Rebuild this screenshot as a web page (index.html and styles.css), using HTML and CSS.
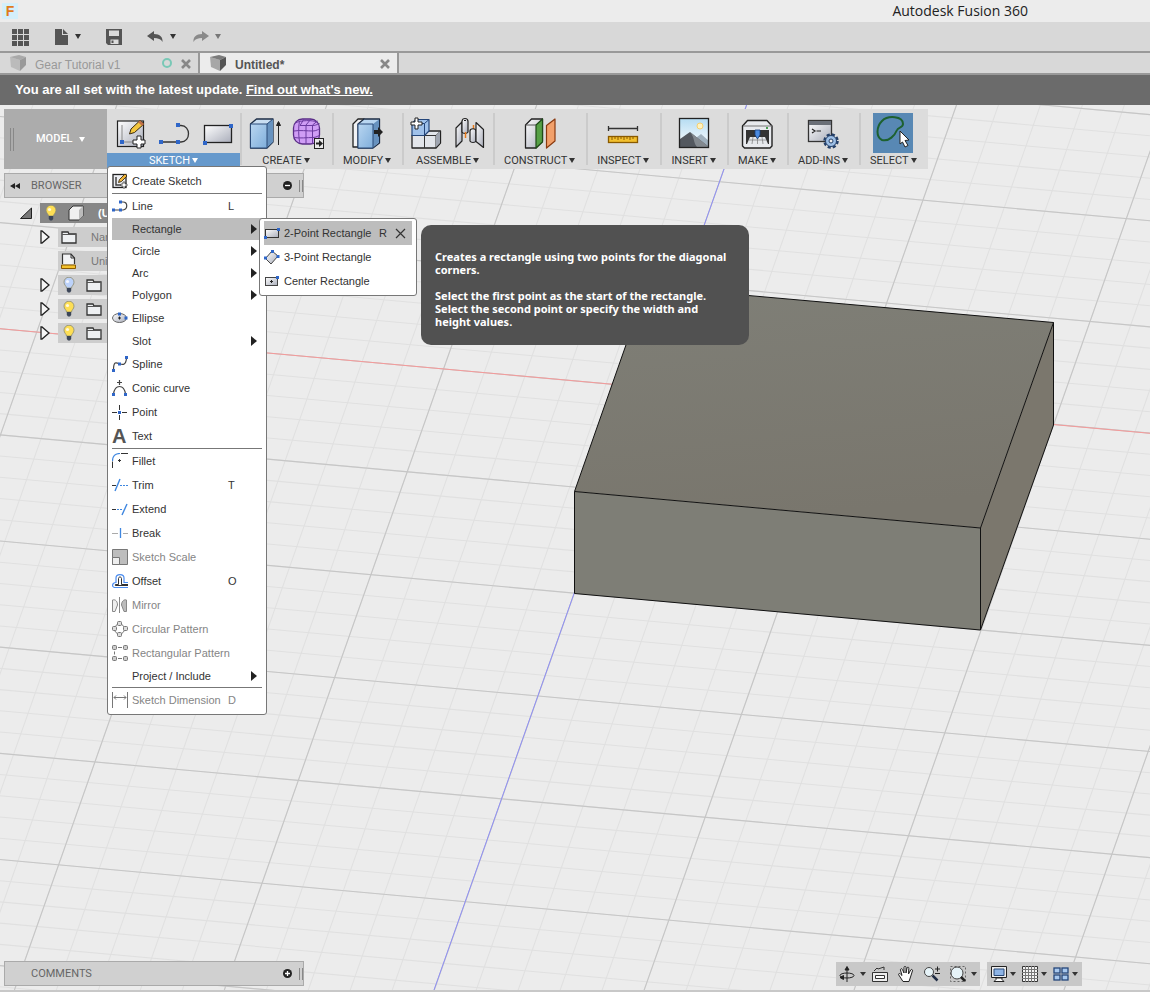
FILE: index.html
```html
<!DOCTYPE html>
<html lang="en">
<head>
<meta charset="utf-8">
<title>Autodesk Fusion 360</title>
<link rel="stylesheet" href="styles.css">
</head>
<body>
<svg class="defs" width="0" height="0" aria-hidden="true">
  <defs>
    <linearGradient id="steel" x1="0" y1="0" x2="1" y2="1"><stop offset="0" stop-color="#fff"/><stop offset="1" stop-color="#a9adba"/></linearGradient>
    <linearGradient id="sky" x1="0" y1="0" x2="0" y2="1"><stop offset="0" stop-color="#b5dcf2"/><stop offset="1" stop-color="#fff"/></linearGradient>
    <linearGradient id="blue" x1="0" y1="0" x2="1" y2="1"><stop offset="0" stop-color="#b9d6f1"/><stop offset="1" stop-color="#7faedb"/></linearGradient>
    <linearGradient id="topface" x1="0" y1="0" x2="0.2" y2="1"><stop offset="0" stop-color="#7f7f77"/><stop offset="1" stop-color="#79766d"/></linearGradient>
    <symbol id="bulb" viewBox="0 0 16 16"><path d="M5.500 11C5.500 9 3 8 3 5.200a5 5 0 0 1 10 0C13 8 10.500 9 10.500 11z" fill="currentColor" stroke="#8a8a70" stroke-width=".8"/><circle cx="6.500" cy="4.500" r="1.600" fill="#fff" opacity=".8"/><path d="M5.800 11h4.400v3L9 15.500H7L5.800 14z" fill="#3c4658"/></symbol>
    <symbol id="folder" viewBox="0 0 16 16"><path d="M1 14V3h6l1 2h7v9z" fill="#eef0f2" stroke="#333" stroke-width="1.300"/><path d="M1 5.500h14" stroke="#555"/></symbol>
    <symbol id="cube" viewBox="0 0 16 16"><path d="M0 2 9 0l7 2-6 3z" fill="currentColor" opacity=".75"/><path d="M0 2l10 3v11L1 12z" fill="currentColor" opacity=".45"/><path d="M10 5l6-3v8l-6 6z" fill="currentColor"/></symbol>
    <symbol id="node" viewBox="0 0 4 4"><path d="M0 0h4v4H0z" fill="#2f66c8"/></symbol>
    <symbol id="collapsed" viewBox="0 0 10 14"><path d="M1 1h1l7 6-7 6H1z" fill="#f6f6f6" stroke="#222" stroke-width="1.300"/></symbol>
  </defs>
</svg>

<header class="titlebar"><span class="logo" aria-hidden="true">F</span><h1>Autodesk Fusion 360</h1></header>

<div class="quickbar" role="toolbar" aria-label="Quick access">
  <button aria-label="Data panel"><svg width="18" height="18" fill="#555"><path d="M0 1h5v5H0zM6 1h5v5H6zM12 1h5v5h-5zM0 7h5v5H0zM6 7h5v5H6zM12 7h5v5h-5zM0 13h5v5H0zM6 13h5v5H6zM12 13h5v5h-5z"/></svg></button>
  <button class="file" aria-label="File"><svg width="14" height="17" fill="#555"><path d="M0 1h7v6h6v10H0zM8 1l5 5H8z"/></svg><i class="caret"></i></button>
  <button class="save" aria-label="Save"><svg width="16" height="17"><path d="M0 1h16v16H2l-2-2z" fill="#555"/><path d="M3 2.500h10V8H3zM4.500 11.500h8V16h-8z" fill="#dcdcdc"/><path d="M5.500 12.500h2V15h-2z" fill="#555"/></svg></button>
  <button class="undo" aria-label="Undo"><svg width="17" height="14"><path d="M0 6l7-5v3c6 0 9 3 8.500 8C14 9 11 8 7 8v3z" fill="#555"/></svg><i class="caret"></i></button>
  <button class="redo" aria-label="Redo"><svg width="17" height="14"><path d="M17 6l-7-5v3C4 4 1 7 1.500 12 3 9 6 8 10 8v3z" fill="#8a8a8a"/></svg><i class="caret"></i></button>
</div>

<nav class="tabs" aria-label="Documents">
  <div class="tab"><svg class="cube" width="16" height="16" color="#999"><use href="#cube"/></svg><a href="#gear">Gear Tutorial v1</a><span class="ring"></span><button aria-label="Close Gear Tutorial v1"><svg width="10" height="10"><path d="M1 1l8 8M9 1L1 9" stroke="#888" stroke-width="2.600"/></svg></button></div>
  <div class="tab active"><svg class="cube" width="16" height="16" color="#555"><use href="#cube"/></svg><a href="#untitled">Untitled*</a><button aria-label="Close Untitled"><svg width="10" height="10"><path d="M1 1l8 8M9 1L1 9" stroke="#888" stroke-width="2.600"/></svg></button></div>
</nav>

<p class="banner">You are all set with the latest update. <a href="#new">Find out what's new.</a></p>

<main class="workspace">
  <svg class="canvas" width="100%" height="100%" aria-label="Model view">
    <g transform="translate(0 -105)">
      <g transform="matrix(40.680 3.690 -7.260 20.570 646.900 387.400)" fill="none">
        <g stroke="#e0e0e0">
          <path d="M-30.013 0H35" stroke-width="90" stroke-dasharray=".026 .974"/>
          <path d="M0-30.025V40" stroke-width="90" stroke-dasharray=".050 .950"/>
        </g>
        <g stroke="#c6c6c6">
          <path d="M-30.013 0H35" stroke-width="90" stroke-dasharray=".028 4.972"/>
          <path d="M0-30.025V40" stroke-width="90" stroke-dasharray=".053 4.947"/>
        </g>
      </g>
      <path d="M0 328.700L646.900 387.400M1053 424.500l97 8.800" stroke="#f59a9a"/>
      <path d="M746.600 105L434 990" stroke="#8f8ff5"/>
      <path d="M574.500 491.500L646.500 286.500 1053.500 322.500 980.500 528z" fill="url(#topface)"/>
      <path d="M574.500 491.500l406 36.500v102l-406-36.500z" fill="#7e7e76"/>
      <path d="M980.500 528l73-205.500v102.500l-73 205z" fill="#7b776d"/>
      <path d="M574.500 491.500L646.500 286.500 1053.500 322.500 980.500 528zM574.500 491.500v102l406 36.500V528M980.500 630l73-205V322.500" fill="none" stroke="#111"/>
    </g>
  </svg>

  <div class="ribbon" role="toolbar" aria-label="Model tools">
    <button class="mode"><i class="grip"></i>MODEL<i class="caret"></i></button>

    <section class="group sketch">
      <div class="tools">
        <button aria-label="New sketch"><svg width="32" height="32"><rect x="2.500" y="4" width="26" height="25.500" fill="url(#steel)" stroke="#222" stroke-width="1.200"/><path d="M7 8v17h14" fill="none" stroke="#888"/><use href="#node" x="5" y="23" width="4" height="4"/><path d="M14.500 17l1.500-5L25 3.500 29 7l-9.500 8.500z" fill="#f3c63e" stroke="#3b2b10"/><path d="M25 3.500L29 7l-2 2-4-4z" fill="#c07048"/><path d="M22 19h4v4h4v4h-4v4h-4v-4h-4v-4h4z" fill="#fff" stroke="#222"/></svg></button>
        <button aria-label="Draw line"><svg width="32" height="32"><path d="M3 25h20c10 0 10-16.500 0-16.500h-3" fill="none" stroke="#333" stroke-width="1.300"/><use href="#node" x="1" y="23" width="4" height="4"/><use href="#node" x="18" y="23" width="4" height="4"/><use href="#node" x="18" y="6" width="4" height="4"/></svg></button>
        <button aria-label="Draw rectangle"><svg width="32" height="32"><rect x="3.500" y="8.500" width="27" height="17" fill="url(#steel)" stroke="#222" stroke-width="1.300"/><use href="#node" x="2" y="24" width="4" height="4"/><use href="#node" x="28" y="7" width="4" height="4"/></svg></button>
      </div>
      <button class="label" aria-expanded="true">SKETCH<i class="caret"></i></button>

      <ul class="menu main-menu">
        <li><button><svg width="16" height="16"><rect x="1" y="1.500" width="13" height="13" fill="#eceef2" stroke="#222" stroke-width="1.300"/><path d="M4 4v8h5" fill="none" stroke="#444" stroke-width="1.500"/><path d="M6.500 9.500l1-3L13 1l2 2-5.500 5.500z" fill="#f0b53a" stroke="#3b2b10" stroke-width=".9"/><path d="M11 9h2v2h2v2h-2v2h-2v-2H9v-2h2z" fill="#fff" stroke="#333" stroke-width=".7"/></svg><span>Create Sketch</span></button></li>
        <li class="sep"></li>
        <li><button><svg width="16" height="16"><path d="M1 12h10c5-1 5-8 0-8H8" fill="none" stroke="#444" stroke-width="1.200"/><path d="M0 10.500h3v3H0zM7 10.500h3v3H7zM7 2.500h3v3H7z" fill="#2f66c8"/></svg><span>Line</span><kbd>L</kbd></button></li>
        <li class="short open"><button aria-expanded="true"><i></i><span>Rectangle</span><kbd></kbd><i class="more"></i></button>
          <ul class="menu submenu">
            <li class="current"><button><svg width="16" height="16"><rect x="1.500" y="4.500" width="13" height="8" fill="url(#steel)" stroke="#333"/><path d="M0 11h3v3H0zM13 3h3v3h-3z" fill="#2f66c8"/></svg><span>2-Point Rectangle</span><kbd>R</kbd><svg width="11" height="11"><path d="M1 1l9 9M10 1l-9 9" stroke="#333" stroke-width="1.200"/></svg></button></li>
            <li><button><svg width="16" height="16"><path d="M1.500 9.500L8 2l6 5-7 8z" fill="url(#steel)" stroke="#444"/><path d="M0 7.500h3v3H0zM7 1h3v3H7zM12.500 6h3v3h-3z" fill="#2f66c8"/></svg><span>3-Point Rectangle</span></button></li>
            <li><button><svg width="16" height="16"><rect x="1.500" y="4.500" width="12" height="8" fill="url(#steel)" stroke="#444"/><path d="M7.500 7v3M6 8.500h3" stroke="#222"/><path d="M12 3h3v3h-3z" fill="#2f66c8"/></svg><span>Center Rectangle</span></button></li>
          </ul>
        </li>
        <li class="short"><button><i></i><span>Circle</span><kbd></kbd><i class="more"></i></button></li>
        <li class="short"><button><i></i><span>Arc</span><kbd></kbd><i class="more"></i></button></li>
        <li class="short"><button><i></i><span>Polygon</span><kbd></kbd><i class="more"></i></button></li>
        <li><button><svg width="16" height="16"><ellipse cx="7.500" cy="8" rx="7" ry="4.500" fill="url(#steel)" stroke="#666"/><path d="M7.500 6.500v3M6 8h3" stroke="#222"/><path d="M6 2.500h3v3H6zM12.500 6.500h3v3h-3z" fill="#2f66c8"/></svg><span>Ellipse</span></button></li>
        <li class="short"><button><i></i><span>Slot</span><kbd></kbd><i class="more"></i></button></li>
        <li><button><svg width="16" height="16"><path d="M1.500 14C1.500 4 5 7 8 8s6 1 6.500-6" fill="none" stroke="#444" stroke-width="1.200"/><path d="M0 13h3v3H0zM6 6.500h3v3H6zM13 0h3v3h-3z" fill="#2f66c8"/></svg><span>Spline</span></button></li>
        <li><button><svg width="16" height="16"><path d="M1.500 14C3 4 12 4 13.500 14M7.500 0v5M5 2.500h5" fill="none" stroke="#444" stroke-width="1.200"/><path d="M0 13h3v3H0zM12 13h3v3h-3z" fill="#2f66c8"/></svg><span>Conic curve</span></button></li>
        <li><button><svg width="16" height="16"><path d="M0 8.500h5m5 0h5M7.500 1v5m0 5v5" stroke="#333"/><path d="M6 7h3v3H6z" fill="#2f66c8"/></svg><span>Point</span></button></li>
        <li><button><b class="glyph" aria-hidden="true">A</b><span>Text</span></button></li>
        <li class="sep"></li>
        <li><button><svg width="16" height="16"><path d="M.5 8C.5 3 3 .5 8 .5" fill="none" stroke="#3f87e0" stroke-width="1.200"/><path d="M.5 8.500V15M9 .5h7M7.500 6v3M6 7.500h3" stroke="#333"/></svg><span>Fillet</span></button></li>
        <li><button><svg width="16" height="16"><path d="M0 8.500h4" stroke="#333"/><path d="M3 14L8 2" stroke="#3f87e0" stroke-width="1.400"/><path d="M8 8.500h8" stroke="#3f87e0" stroke-dasharray="2 1"/></svg><span>Trim</span><kbd>T</kbd></button></li>
        <li><button><svg width="16" height="16"><path d="M0 8.500h4" stroke="#333"/><path d="M5 8.500h6" stroke="#3f87e0" stroke-dasharray="2 1"/><path d="M10 14l5-11" stroke="#3f87e0" stroke-width="1.400"/></svg><span>Extend</span></button></li>
        <li><button><svg width="16" height="16"><path d="M0 8.500h6m5 0h5" stroke="#aaa"/><path d="M8.500 3v10" stroke="#3f87e0" stroke-width="1.300"/></svg><span>Break</span></button></li>
        <li><button disabled><svg width="16" height="16"><path d="M.5.500h15v15H.5z" fill="#bdbdbd" stroke="#777"/><path d="M.5 8.500h7v7h-7z" fill="#eee" stroke="#777"/></svg><span>Sketch Scale</span></button></li>
        <li><button><svg width="16" height="16" fill="none"><path d="M16 14.500H2.500C-.5 14 0 9.500 4 9.500V5c0-4.500 8-4.500 8 0v4.500h4" stroke="#4a8cf0" stroke-width="1.200"/><path d="M16 12.500H4c-1.500 0-1.500-1 0-1h2.500V5.500c0-2 3-2 3 0v6H16" stroke="#333"/></svg><span>Offset</span><kbd>O</kbd></button></li>
        <li><button disabled><svg width="16" height="16" stroke="#888"><path d="M.5 14.500V3C4 2 5.500 5 5.500 8L3 14.500z" fill="#eee"/><path d="M14.500 14.500V3c-3-1-5 2-5 5l2.500 6.500z" fill="#bbb"/><path d="M7.500 0v16"/></svg><span>Mirror</span></button></li>
        <li><button disabled><svg width="16" height="16" fill="#ddd" stroke="#777"><circle cx="7.500" cy="8" r="5" fill="none"/><rect x="5.500" y=".5" width="4" height="4" rx="1"/><rect x=".5" y="5.500" width="4" height="4" rx="1"/><rect x="11.500" y="5.500" width="4" height="4" rx="1"/><rect x="5.500" y="11.500" width="4" height="4" rx="1"/></svg><span>Circular Pattern</span></button></li>
        <li><button disabled><svg width="16" height="16" fill="#ccc" stroke="#777"><path d="M2.500 6.500v3M6 2.500h4M6 13.500h4"/><rect x=".5" y=".5" width="4" height="4" rx="1"/><rect x="11.500" y=".5" width="4" height="4" rx="1"/><rect x=".5" y="11.500" width="4" height="4" rx="1"/><rect x="11.500" y="11.500" width="4" height="4" rx="1"/></svg><span>Rectangular Pattern</span></button></li>
        <li class="short"><button><i></i><span>Project / Include</span><kbd></kbd><i class="more"></i></button></li>
        <li class="sep"></li>
        <li><button disabled><svg width="16" height="16" fill="none" stroke="#777"><path d="M.5 0v16M15.500 0v16M2 5.500h12M4 3.500l-2 2 2 2M12 3.500l2 2-2 2"/></svg><span>Sketch Dimension</span><kbd>D</kbd></button></li>
      </ul>
    </section>

    <section class="group create">
      <div class="tools">
        <button aria-label="Extrude"><svg width="32" height="32" stroke-linejoin="round"><path d="M1.500 7l6-5h16.500v23l-6 6H1.500z" fill="#c9def2" stroke="#1c2c44" stroke-width="1.300"/><path d="M18 7v23.500l6-5.500V2z" fill="#6792bf"/><path d="M1.500 7H18v24H1.500z" fill="url(#blue)" stroke="#2b4b78"/><path d="M18 7l6-5" stroke="#2b4b78"/><path d="M29.500 28V6M27.500 8.500l2-4 2 4z" fill="#222" stroke="#222"/></svg></button>
        <button aria-label="Create form"><svg width="32" height="32"><rect x="1.500" y="2" width="26" height="25" rx="9" fill="#cf9df5" stroke="#5a2d86" stroke-width="1.300"/><path d="M8 8.500h13c3 0 6-2 6.500-2M8 3.500C6 7 6.500 22 8 26.500M14 8v19M20.500 8v18.500M2 14c5-1 14 0 19 0 3 0 6-2 6.500-2M2 20.500c5 1 14 0 19 0 3 0 6-2 6-2M14 8l5-6M20.500 8l5-4M8 8.500L12 2M3 6c7-3 17-3 22-1" fill="none" stroke="#6b3aa0"/><rect x="22.500" y="21.500" width="9" height="10" fill="#e8e8e8" stroke="#222"/><path d="M24 25.500h3v-2.500l4 3.500-4 3.500v-2.500h-3z" fill="#222"/></svg></button>
      </div>
      <button class="label">CREATE<i class="caret"></i></button>
    </section>

    <section class="group">
      <div class="tools"><button aria-label="Press pull"><svg width="32" height="32" stroke-linejoin="round"><path d="M2 7l5-5h6v28H2z" fill="#f1f2f4" stroke="#222" stroke-width="1.300"/><path d="M7 7l6-5h15.500v24L22 31H7z" fill="#b9d6f1" stroke="#1c2c44" stroke-width="1.300"/><path d="M22 7v23.500l6-5V2.500z" fill="#6792bf"/><path d="M7 7h15v24H7z" fill="url(#blue)" stroke="#2b4b78"/><path d="M23 13h4v-3l5 5-5 5v-3h-4z" fill="#222"/></svg></button></div>
      <button class="label">MODIFY<i class="caret"></i></button>
    </section>

    <section class="group">
      <div class="tools">
        <button aria-label="New component"><svg width="32" height="32" stroke-linejoin="round"><path d="M2 18.500L5 15h9.500l3-1h13v12L26 31H2z" fill="#e2e5ea" stroke="#222" stroke-width="1.300"/><path d="M2.500 18.500h12V31M14.500 18.500H26V31M26 18.500l4.500-4.500" fill="none" stroke="#333"/><path d="M26 18.500l4-4V26l-4 4z" fill="#9fa5b0"/><path d="M2 6.500l4-4h13V14l-4.500 4.500H2z" fill="#9fc1ea" stroke="#24467a" stroke-width="1.200"/><path d="M14.500 6.500H2.500M14.500 6.500v12M14.500 6.500l4.500-4" stroke="#24467a"/><path d="M5 1h3v4h4v3H8v4H5V8H1V5h4z" fill="#fff" stroke="#222"/></svg></button>
        <button aria-label="Joint"><svg width="32" height="32" stroke-linejoin="round"><path d="M3 11l6-6v19l-6 6z" fill="url(#steel)" stroke="#222" stroke-width="1.200"/><path d="M9 4.500c0-4 6-4 6 0V15c-1 2-5 2-6 0z" fill="url(#steel)" stroke="#222" stroke-width="1.200"/><path d="M12.500 15v6M20.500 8v5" stroke="#e87a1a" stroke-width="1.500"/><path d="M17 14c0-3 6-3 6 0v10c-1 2-5 2-6 0z" fill="url(#steel)" stroke="#222" stroke-width="1.200"/><path d="M23 5.500l7.500 7v18l-7.500-6z" fill="url(#steel)" stroke="#222" stroke-width="1.200"/><path d="M11 3.500h2" stroke="#222"/></svg></button>
      </div>
      <button class="label">ASSEMBLE<i class="caret"></i></button>
    </section>

    <section class="group">
      <div class="tools"><button aria-label="Construction plane"><svg width="32" height="32" stroke-linejoin="round"><path d="M1.500 8l6-6h11v22l-6.500 7H1.500z" fill="url(#steel)" stroke="#222" stroke-width="1.300"/><path d="M12 8l6.500-6v23L12 31z" fill="#55a046" stroke="#1e4a18" stroke-width="1.200"/><path d="M1.500 8H12" stroke="#555"/><path d="M22.500 8.500L31 2v22l-8.500 7z" fill="#f2a06a" stroke="#8a3a10" stroke-width="1.200"/></svg></button></div>
      <button class="label">CONSTRUCT<i class="caret"></i></button>
    </section>

    <section class="group">
      <div class="tools"><button aria-label="Measure"><svg width="32" height="32"><path d="M1.500 9v5M30.500 9v5M1.500 11.500h29" stroke="#333" stroke-width="1.300"/><rect x="1.500" y="19.500" width="29" height="6" fill="#f2c02e" stroke="#8a5a00" stroke-width="1.300"/><path d="M5 20v3M8 20v2M11 20v3M14 20v2M17 20v3M20 20v2M23 20v3M26 20v2" stroke="#8a5a00"/></svg></button></div>
      <button class="label">INSPECT<i class="caret"></i></button>
    </section>

    <section class="group">
      <div class="tools"><button aria-label="Insert image"><svg width="32" height="32"><rect x="1.500" y="1.500" width="29" height="29" fill="url(#sky)"/><circle cx="22" cy="9" r="3" fill="#fff3c0" stroke="#f5cf70"/><path d="M14 24l9-7 8 7v6H14z" fill="#9fb0bd"/><path d="M2 22l10-7 19 15H2z" fill="#53585f"/><path d="M12 15l19 15H19c-4-5-2-9-7-15z" fill="#83898f"/><rect x="1.500" y="1.500" width="29" height="29" fill="none" stroke="#222" stroke-width="1.300"/></svg></button></div>
      <button class="label">INSERT<i class="caret"></i></button>
    </section>

    <section class="group">
      <div class="tools"><button aria-label="3D print"><svg width="32" height="32" stroke-linejoin="round"><path d="M1.500 9l5-5.500H26L31 9v20l-2 2H3.500l-2-2z" fill="#e8eaee" stroke="#222" stroke-width="1.400"/><path d="M2 9h29" stroke="#777"/><path d="M5 13h23v14H5z" fill="#333"/><path d="M9 20h15l3 7H6z" fill="#e4e7eb"/><path d="M8 23h17M12 20l-1 7M16.500 20v7M21 20l1 7" stroke="#777" stroke-width=".7"/><path d="M14 13h5v5l-2.500 4-2.500-4z" fill="#4a8ae0" stroke="#163c78" stroke-width=".8"/><circle cx="26" cy="11" r="1" fill="#16831c"/></svg></button></div>
      <button class="label">MAKE<i class="caret"></i></button>
    </section>

    <section class="group">
      <div class="tools"><button aria-label="Scripts and add-ins"><svg width="32" height="32"><rect x="1.500" y="3.500" width="23" height="21" fill="url(#steel)" stroke="#333" stroke-width="1.300"/><path d="M2 4h22v4H2z" fill="#6a6f78"/><path d="M5 12l3 2-3 2M9.500 14H14" fill="none" stroke="#222" stroke-width="1.200"/><circle cx="24" cy="24" r="6.500" fill="none" stroke="#243f68" stroke-width="2.500" stroke-dasharray="3.100 2"/><circle cx="24" cy="24" r="5.500" fill="#9dbfe6" stroke="#243f68"/><circle cx="24" cy="24" r="2" fill="#eee" stroke="#243f68"/></svg></button></div>
      <button class="label">ADD-INS<i class="caret"></i></button>
    </section>

    <section class="group">
      <div class="tools"><button class="selected" aria-label="Select"><svg width="40" height="40"><path d="M9 27C3 24 3 14 9 8s21-5 21 3c0 4-5 3-6 6-2 5-8 12-15 10z" fill="none" stroke="#1d6130" stroke-width="2"/><path d="M27 18l9 9-4 .5 3 5-3 1.500-2.500-5L27 31z" fill="#fff" stroke="#222"/></svg></button></div>
      <button class="label">SELECT<i class="caret"></i></button>
    </section>
  </div>

  <section class="browser">
    <h2 class="panel"><svg width="10" height="8"><path d="M0 4l5-3v6zM5 4l5-3v6z" fill="#222"/></svg><span>BROWSER</span><button aria-label="Collapse browser"><svg width="9" height="9"><circle cx="4.500" cy="4.500" r="4.500" fill="#222"/><path d="M2 4.500h5" stroke="#fff" stroke-width="1.300"/></svg></button><i class="grip"></i></h2>
    <ul class="tree">
      <li class="root"><svg width="12" height="12"><path d="M.5 11.500h11V1z" fill="#777" stroke="#222"/></svg><div><svg width="16" height="16" color="#fdde55"><use href="#bulb"/></svg><svg class="body" width="16" height="16" stroke-linejoin="round"><path d="M1 5l4-4h10v10l-4 4H1z" fill="#f0f0f0" stroke="#333"/><path d="M11 5l4-4v10l-4 4z" fill="#bbb"/></svg><span>(U</span></div></li>
      <li><svg width="10" height="14"><use href="#collapsed"/></svg><div><svg width="16" height="16"><use href="#folder"/></svg><span>Nar</span></div></li>
      <li><i></i><div><svg width="16" height="16"><path d="M1.500 11V1H10l3.500 4v6" fill="#f2f3f5" stroke="#333" stroke-width="1.200"/><path d="M10 1v4h3.500" fill="none" stroke="#333"/><path d="M.5 12h14v3.500H.5z" fill="#f4c22c" stroke="#8a5a00"/></svg><span>Uni</span></div></li>
      <li><svg width="10" height="14"><use href="#collapsed"/></svg><div><svg width="16" height="16" color="#bcd2fa"><use href="#bulb"/></svg><svg width="16" height="16"><use href="#folder"/></svg></div></li>
      <li><svg width="10" height="14"><use href="#collapsed"/></svg><div><svg width="16" height="16" color="#fdde55"><use href="#bulb"/></svg><svg width="16" height="16"><use href="#folder"/></svg></div></li>
      <li><svg width="10" height="14"><use href="#collapsed"/></svg><div><svg width="16" height="16" color="#fdde55"><use href="#bulb"/></svg><svg width="16" height="16"><use href="#folder"/></svg></div></li>
    </ul>
  </section>

  <div class="tooltip" role="tooltip">
    <p>Creates a rectangle using two points for the diagonal corners.</p>
    <p>Select the first point as the start of the rectangle. Select the second point or specify the width and height values.</p>
  </div>

  <footer class="bottom">
    <h2 class="panel comments"><span>COMMENTS</span><button aria-label="Expand comments"><svg width="9" height="9"><circle cx="4.500" cy="4.500" r="4.500" fill="#222"/><path d="M2 4.500h5M4.500 2v5" stroke="#fff" stroke-width="1.300"/></svg></button><i class="grip"></i></h2>
    <div class="navs">
      <div class="nav" role="toolbar" aria-label="Navigation">
        <button class="orbit" aria-label="Orbit"><svg width="16" height="16" fill="none" stroke="#222"><ellipse cx="8" cy="9.500" rx="7" ry="2.500"/><path d="M8 3v13"/><path d="M6 4l2-3.500L10 4zM1 11.500l3.500-2v4z" fill="#222"/></svg><i class="caret"></i></button>
        <button class="tool" aria-label="Look at"><svg width="16" height="16"><path d="M.5 6.500h15v9H.5z" fill="#eee" stroke="#333"/><path d="M3.500 9.500h9v3h-9z" fill="#fff" stroke="#333"/><path d="M2 5l3-3 1 1 6-2v3" fill="none" stroke="#333"/></svg></button>
        <button class="tool" aria-label="Pan"><svg width="16" height="16"><path d="M5 15.500L.8 9c-.8-1.500 1-2 1.800-.8L4 9.500 2.500 4c-.3-1.500 1.500-1.800 2-.3L6 7V1.500c0-1.500 2-1.500 2 0V7l1-5c.4-1.400 2-1 1.800.4L10.500 8l2.200-4c.8-1.200 2.300-.3 1.700 1L12.500 11 11 15.500z" fill="#fff" stroke="#222"/></svg></button>
        <button class="tool" aria-label="Zoom"><svg width="16" height="16"><circle cx="5" cy="6" r="4.500" fill="#e6f3f8" stroke="#444"/><path d="M8.500 9.500l5 5" stroke="#1f2c44" stroke-width="2.500"/><path d="M11 3h5M13.500.5v5M11 7.500h5" stroke="#222"/></svg></button>
        <button class="fit" aria-label="Fit"><svg width="16" height="16"><rect x=".5" y=".5" width="15" height="15" fill="none" stroke="#666" stroke-dasharray="2 2"/><circle cx="7" cy="7" r="6" fill="#e6f3f8" stroke="#444"/><path d="M11 11l4 4" stroke="#222" stroke-width="2.500"/></svg><i class="caret"></i></button>
      </div>
      <div class="nav display" role="toolbar" aria-label="Display">
        <button aria-label="Display settings"><svg width="16" height="16"><path d="M.5.500h15v11H.5z" fill="#eee" stroke="#222"/><path d="M3 3h10v6.500H3z" fill="#8db4e6" stroke="#2b4b78"/><path d="M5 12h6v1.500l2 2H3l2-2z" fill="#fff" stroke="#222"/></svg><i class="caret"></i></button>
        <button aria-label="Grid settings"><svg width="16" height="16"><path d="M.5.500h15v15H.5z" fill="#f4f4f4" stroke="#333"/><path d="M3.500 0v16M6.500 0v16M9.500 0v16M12.500 0v16M0 3.500h16M0 6.500h16M0 9.500h16M0 12.500h16" stroke="#777"/></svg><i class="caret"></i></button>
        <button aria-label="Viewports"><svg width="16" height="16" fill="#a8c8ee" stroke="#24467a" stroke-width="1.300"><rect x="1" y="2" width="6" height="5"/><rect x="9" y="2" width="6" height="5"/><rect x="1" y="9" width="6" height="5"/><rect x="9" y="9" width="6" height="5"/></svg><i class="caret"></i></button>
      </div>
    </div>
  </footer>
</main>
</body>
</html>
```

FILE: styles.css
```css
* { box-sizing: border-box; }

body {
  margin: 0;
  min-height: 100vh;
  display: flex;
  flex-direction: column;
  font: 11px/14px "Liberation Sans", Arial, sans-serif;
  color: #333;
  background: #ececec;
}

button {
  margin: 0;
  padding: 0;
  border: 0;
  background: none;
  font: inherit;
  color: inherit;
  display: flex;
  align-items: center;
}

ul { list-style: none; margin: 0; padding: 0; }
svg { display: block; flex: none; }
.defs { position: absolute; }

.caret {
  flex: none;
  border: solid transparent;
  border-width: 5px 3px 0;
  border-top-color: currentColor;
}

/* window header */
.titlebar {
  height: 22px;
  padding: 0 122px 0 2px;
  display: flex;
  align-items: center;
  justify-content: space-between;
}

.titlebar h1 { margin: 0; font: 14px/20px "Open Sans", sans-serif; color: #222; }

.logo {
  width: 16px;
  height: 16px;
  background: #d3effb;
  font: bold 14px/16px "Liberation Sans", sans-serif;
  color: #e07b1c;
  text-align: center;
}

.quickbar {
  height: 31px;
  padding-left: 12px;
  display: flex;
  align-items: center;
  background: #d8d8d8;
  border-bottom: 2px solid #999;
}

.quickbar button { gap: 6px; margin-right: 25px; }
.quickbar .undo { margin-right: 16px; }
.quickbar .redo { color: #777; }

.tabs {
  height: 22px;
  display: flex;
  background: #d8d8d8;
  border-bottom: 2px solid #999;
}

.tab {
  width: 200px;
  padding: 0 7px 0 10px;
  display: flex;
  align-items: center;
  gap: 9px;
  border-right: 2px solid #999;
  font-size: 12px;
  color: #999;
}

.tab a { flex: 1; margin-top: 4px; color: inherit; text-decoration: none; }
.tab button { margin-top: 1px; }
.ring { width: 10px; height: 10px; border: 2px solid #79c8b6; border-radius: 50%; }
.tab.active { width: 199px; background: #ececec; color: #555; font-weight: bold; }

.banner {
  margin: 0;
  padding: 0 15px;
  background: #6b6b6b;
  color: #fff;
  font-weight: bold;
  font-size: 13px;
  line-height: 30px;
}

.banner a { color: inherit; }

/* modelling area */
.workspace {
  position: relative;
  flex: 1;
  display: flex;
  flex-direction: column;
  padding: 4px;
  border-bottom: 2px solid #c8c8c8;
}

.canvas { position: absolute; inset: 0; }

.ribbon {
  position: relative;
  z-index: 2;
  align-self: flex-start;
  display: flex;
  height: 60px;
  background: #dcdcdc;
  font-family: Roboto, sans-serif;
}

.mode {
  width: 103px;
  gap: 6px;
  padding-left: 6px;
  background: #acacac;
  color: #fff;
  font-weight: 500;
}

.grip { width: 4px; height: 23px; border: solid #888; border-width: 0 1px; }
.mode .grip { margin-right: 16px; }

.group { position: relative; display: flex; flex-direction: column; padding: 0 8px; }

.group + .group::before {
  content: "";
  position: absolute;
  left: 0;
  top: 4px;
  bottom: 4px;
  border-left: 2px solid #cbcbcb;
}

.tools { height: 44px; padding-top: 3px; display: flex; gap: 11px; align-items: center; justify-content: center; }
.label { height: 15px; gap: 2px; padding: 0 3px; justify-content: center; white-space: nowrap; }
.sketch { width: 133px; padding: 0; }
.sketch .label { background: #6699cc; color: #fff; }
.create { width: 92px; padding: 0; }
.selected { background: #5888b4; }

/* menus */
.menu {
  position: absolute;
  background: #fff;
  border: 1px solid #777;
  border-radius: 3px;
  font: 11px/14px "Liberation Sans", Arial, sans-serif;
}

.main-menu { left: 0; top: 57px; width: 160px; padding: 2px 4px; }

.menu li { position: relative; }

.menu button {
  width: 100%;
  height: 24px;
  display: grid;
  grid-template-columns: 16px 92px 1fr 6px;
  gap: 4px;
  padding-right: 5px;
  text-align: left;
  white-space: nowrap;
}

.menu .short > button { height: 22px; }
.menu button:disabled { color: #858585; }
.menu kbd { font: inherit; }
.menu .sep { height: 1px; background: #777; }
.menu .open > button, .menu .current > button { background: #bdbdbd; }
.more { border: solid transparent; border-width: 5px 0 5px 6px; border-left-color: #222; }
.glyph { font: bold 20px/20px "Liberation Sans", sans-serif; color: #555; }

.submenu { left: 147px; top: 0; width: 158px; padding: 2px 4px; z-index: 1; }
.submenu button { grid-template-columns: 16px 91px 12px 11px; }

/* browser panel */
.panel {
  width: 300px;
  height: 25px;
  margin: 0;
  padding: 0 0 0 5px;
  display: flex;
  align-items: center;
  background: #d0d0d0;
  border: 1px solid #aaa;
  font: 11px/14px Roboto, sans-serif;
  color: #666;
}

.panel span { flex: 1; margin-left: 11px; }
.panel .grip { height: 12px; margin-left: 7px; }
.comments { padding-left: 15px; }

.browser { position: relative; align-self: flex-start; margin-top: 4px; }
.tree { width: 110px; padding-top: 5px; }
.tree li { display: flex; align-items: center; height: 20px; margin-bottom: 4px; padding-left: 36px; }
.tree li > :first-child { width: 10px; }
.tree li > div { flex: 1; display: flex; align-items: center; height: 20px; margin-left: 8px; padding-left: 3px; gap: 9px; background: #cdcdcd; color: #777; }
.tree li > div span { margin-left: 5px; }
.tree .root { padding-left: 16px; }
.tree .root > :first-child { width: 12px; }
.tree .root > div { background: #878787; color: #fff; font-weight: bold; }

.tooltip {
  position: absolute;
  left: 421px;
  top: 120px;
  width: 328px;
  padding: 25px 14px 17px;
  border-radius: 10px;
  background: #515151;
  color: #fff;
  font: bold 11px/13px "Noto Sans", sans-serif;
}

.tooltip p { margin: 0; }
.tooltip p + p { margin-top: 13px; }

/* bottom bar */
.bottom {
  position: relative;
  margin-top: auto;
  display: flex;
  align-items: center;
  justify-content: space-between;
  padding-right: 64px;
}

.navs { display: flex; gap: 7px; }
.nav { display: flex; height: 24px; padding: 0 3px; background: #c8c8c8; }
.nav .caret { border-width: 4px 3px 0; margin-left: 5px; }
.nav .tool { width: 26px; justify-content: center; }
.nav .orbit { padding-right: 1px; }
.nav .fit { padding-left: 5px; }
.display { gap: 6px; padding: 0 4px; }
.display .caret { margin-left: 3px; }
```
